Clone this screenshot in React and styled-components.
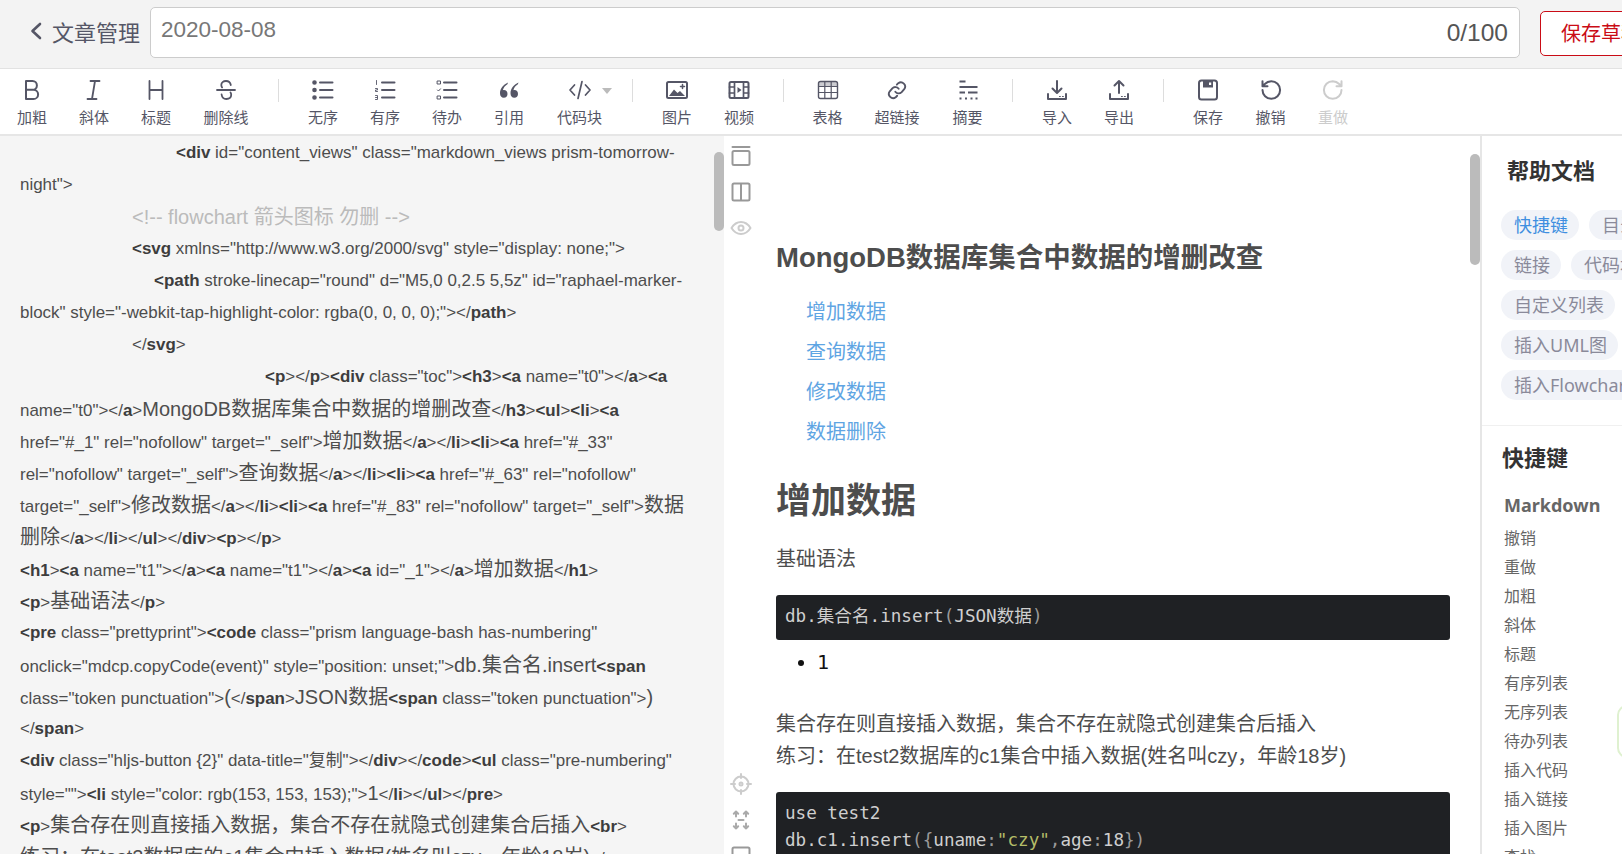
import React from "react";
import styled, { createGlobalStyle } from "styled-components";

const Global = createGlobalStyle`
  html, body { margin: 0; padding: 0; background: #fff; overflow: hidden; }
  * { box-sizing: border-box; }
`;

const sans = `"Liberation Sans", "Noto Sans CJK SC", sans-serif`;
const mono = `"DejaVu Sans Mono", "Noto Sans CJK SC", monospace`;

const Page = styled.div`
  width: 1622px; height: 854px; overflow: hidden; position: relative;
  font-family: ${sans}; background: #fff;
`;
const TopBar = styled.header`
  height: 69px; background: #f3f3f3; border-bottom: 1px solid #e2e2e2;
  display: flex; padding-left: 29px; overflow: hidden;
`;
const Back = styled.div`
  width: 121px; flex: none; display: flex; align-items: center; gap: 9px; height: 61px;
  color: #555666; font-size: 22px; white-space: nowrap;
  svg { flex: none; }
`;
const TitleBox = styled.div`
  width: 1370px; height: 51px; margin-top: 7px; flex: none; background: #fff;
  border: 1px solid #ccc; border-radius: 5px; display: flex; justify-content: space-between;
  padding: 0 11px 0 10px;
`;
const TitleText = styled.span`
  font-size: 22.5px; color: #777; line-height: 44px;
`;
const Counter = styled.span`
  font-size: 24.5px; color: #555; line-height: 50px;
`;
const DraftButton = styled.button`
  flex: none; margin: 11px 0 0 20px; width: 122px; height: 45px; background: #fff;
  border: 1px solid #ca0c16; border-radius: 5px; color: #ca0c16; font: 20px ${sans};
  padding: 0 0 3px 20px; text-align: left; white-space: nowrap;
`;
const Toolbar = styled.nav`
  height: 67px; background: #fff; border-bottom: 2px solid #e6e6e6;
  display: flex; padding: 9px 0 0 1px; color: #555666;
`;
const Tool = styled.div`
  width: ${p => p.$w || 62}px; flex: none; position: relative; display: flex; flex-direction: column; align-items: center;
  color: ${p => (p.$off ? "#cccccc" : "#555666")};
`;
const ToolIcon = styled.svg`
  width: 24px; height: 24px; flex: none; fill: none; stroke: currentColor; stroke-width: 2;
  stroke-linecap: round; stroke-linejoin: round;
`;
const ToolLabel = styled.span`
  font-size: 15px; line-height: 20px; margin-top: 6px; white-space: nowrap;
`;
const Caret = styled.i`
  position: absolute; left: 62px; top: 10px; width: 0; height: 0;
  border-left: 5px solid transparent; border-right: 5px solid transparent; border-top: 6px solid #bbb;
`;
const Divider = styled.span`
  flex: none; width: 1px; height: 23px; margin: 0 13px; background: #ddd; transform: translateY(1px);
`;
const Workspace = styled.main`
  display: flex; height: 718px; overflow: hidden;
`;
const SourcePane = styled.section`
  width: 724px; flex: none; background: #f5f5f5; position: relative; overflow: hidden;
  padding: 1px 0 0 20px; color: #4d4d4d;
`;
const Line = styled.div`
  height: 32px; line-height: 32px; white-space: nowrap; padding-left: ${p => p.$indent || 0}px;
  font-size: 17px; color: ${p => (p.$comment ? "#bbbbbb" : "#4d4d4d")};
`;
const Attr = styled.span`
  font-size: 16.95px;
`;
const Bold = styled.b`
  font-size: 16.95px; font-weight: 700; color: #3d3d3d;
`;
const Big = styled.span`
  font-size: 20px;
`;
const CommentText = styled.span`
  font-size: 20px;
`;
const Thumb = styled.div`
  position: absolute; left: ${p => p.$left}px; top: ${p => p.$top}px; width: 10px; height: ${p => p.$h}px;
  background: #bbb; border-radius: 5px;
`;
const Rail = styled.aside`
  width: 52px; flex: none; display: flex; flex-direction: column; justify-content: space-between;
  padding: 9px 0 0 6px; margin-bottom: -13px; background: #fff;
`;
const RailGroup = styled.div`
  display: flex; flex-direction: column; gap: 14px;
`;
const RailIcon = styled.svg`
  display: block; width: 22px; height: 22px; fill: none; stroke: ${p => p.$c || "#999"}; stroke-width: 2;
  stroke-linecap: round; stroke-linejoin: round;
`;
const Preview = styled.article`
  width: 704px; flex: none; position: relative; overflow: hidden; padding: 102px 30px 0 0; color: #4d4d4d;
`;
const H2 = styled.h2`
  margin: 0 0 14px; font-size: 27.5px; line-height: 40px; font-weight: 700; color: #4d4d4d; white-space: nowrap;
`;
const TocLink = styled.a`
  display: block; margin-left: 30px; font-size: 20px; line-height: 40px; color: #5fa5e3; height: 40px;
`;
const H1 = styled.h1`
  margin: 24px 0 17px; font-size: 35px; line-height: 50px; font-weight: 700; color: #4d4d4d;
`;
const Para = styled.p`
  margin: ${p => p.$mt || 0}px 0 0; font-size: 20px; line-height: 32px; color: #4d4d4d; white-space: nowrap;
`;
const CodeBlock = styled.pre`
  margin: 20px 0 0; background: #1f2124; border-radius: 3px; padding: 8px 9px 10px; color: #cfcfcf;
  font-family: ${mono}; font-size: 17.6px; line-height: 27px; white-space: pre; overflow: hidden;
`;
const Punct = styled.span`
  color: #999;
`;
const Str = styled.span`
  color: #b5bd68;
`;
const NumList = styled.ul`
  margin: 6px 0 0; padding: 0 0 0 41px; font-family: ${mono}; font-size: 20px; line-height: 32px; color: #111;
`;
const Help = styled.aside`
  flex: 1; min-width: 0; border-left: 2px solid #e6e6e6; overflow: hidden; padding-top: 18px;
`;
const HelpHead = styled.div`
  padding: 0 0 0 ${p => p.$pad}px; font-size: 22px; line-height: 30px; font-weight: 700; color: #333;
  font-family: "Noto Sans CJK SC", sans-serif; white-space: nowrap;
`;
const Chips = styled.div`
  display: flex; flex-direction: column; gap: 10px; margin: 26px 0 25px; padding-left: 19px;
`;
const ChipRow = styled.div`
  display: flex; gap: 10px;
`;
const Chip = styled.span`
  flex: none; height: 30px; border-radius: 15px; background: #f1f3f8; padding: 0 11px 0 13px;
  font: 18px/30px "Noto Sans", "Noto Sans CJK SC", sans-serif; white-space: nowrap;
  color: ${p => (p.$active ? "#3f8fe0" : "#8a8a9a")};
`;
const Rule = styled.div`
  height: 1px; background: #f0f0f0; margin-bottom: 15px;
`;
const KeyTitle = styled.div`
  margin: 21px 0 5px 22px; font: 700 18px/26px "Noto Sans", "Noto Sans CJK SC", sans-serif; color: #666;
`;
const KeyItem = styled.div`
  margin-left: 22px; font: 16px/29px "Noto Sans CJK SC", sans-serif; color: #666; white-space: nowrap;
`;
const FloatTab = styled.div`
  position: absolute; left: 1617px; top: 705px; width: 24px; height: 53px; background: #fff;
  border: 2px solid #dff1d0; border-radius: 10px;
`;

const I = ({ children }) => <ToolIcon viewBox="0 0 24 24">{children}</ToolIcon>;

const quoteMark = "M11 4.500C6 6.800 3 10.800 3 15.200c0 2.800 1.500 4.600 3.800 4.600s3.700-1.700 3.700-3.900-1.500-3.800-3.500-3.800c-.4 0-.8 0-1.100.2.500-2.500 2.200-4.600 4.500-6z";

const icons = {
  bold: <I><path d="M6 3h6.500a4.400 4.400 0 0 1 0 8.800H6zM6 11.800h7.500a4.600 4.600 0 0 1 0 9.200H6z" /></I>,
  italic: <I><path d="M8.500 3h9M13 3 10 21M5.500 21h9" strokeWidth="1.8" /></I>,
  heading: <I><path d="M5.500 3v18M18.500 3v18M5.500 12h13" strokeWidth="1.8" /></I>,
  strike: <I><path d="M3 12h18M16.800 7C16.300 4.200 14.500 3 12 3 9.200 3 7.300 4.700 7.300 7c0 .9.3 1.700.8 2.400M7.600 16.500C8 19.500 9.800 21 12.300 21c3 0 4.900-1.800 4.900-4.200 0-.9-.2-1.700-.7-2.400" strokeWidth="1.8" /></I>,
  ul: <I><path d="M9 4.500h12.500M9 12h12.500M9 19.500h12.500" /><circle cx="3.500" cy="4.500" r="1.300" fill="currentColor" /><circle cx="3.500" cy="12" r="1.300" fill="currentColor" /><circle cx="3.500" cy="19.500" r="1.300" fill="currentColor" /></I>,
  ol: <I><path d="M9 4.500h12.500M9 12h12.500M9 19.500h12.500" /><path d="M3.500 2.500v4M2.500 10.500h2v1.500h-2v1.500h2M2.500 17.500h2v4h-2M2.500 19.500h2" strokeWidth="0.9" /></I>,
  todo: <I><path d="M9 4.500h12.500M9 12h12.500M9 19.500h12.500" /><path d="M2.500 3h3v3h-3zM2.500 12l1 1 2-2.200M2.500 18h3v3h-3z" strokeWidth="1" /></I>,
  quote: <I><path d={quoteMark} fill="currentColor" stroke="none" /><path d={quoteMark} transform="translate(10.500 0)" fill="currentColor" stroke="none" /></I>,
  code: <I><path d="M6.500 7 2 12l4.500 5M17.500 7 22 12l-4.500 5M14 3.500 10 20.500" strokeWidth="1.7" /></I>,
  image: <I><rect x="2" y="4" width="20" height="16" rx="1.500" /><path d="M4 18l5-6.500 3.500 3.500 2.500-2 5 5z" fill="currentColor" stroke="none" /><path d="M17.500 6.500v4M15.500 8.500h4" strokeWidth="1.5" /></I>,
  video: <I><rect x="2.500" y="4" width="19" height="16" rx="1.500" /><path d="M7.500 4v16M16.500 4v16M2.500 9h5M2.500 15h5M16.500 9h5M16.500 15h5" strokeWidth="1.7" /><path d="M10.500 9l4 3-4 3z" fill="currentColor" stroke="none" /></I>,
  table: <I><rect x="2.500" y="3.500" width="19" height="17" rx="2" strokeWidth="1.4" /><path d="M2.500 8.500h19M2.500 14.500h19M8.800 4v16M15.200 4v16" strokeWidth="1.2" /><path d="M3 4h18v4H3z" fill="currentColor" stroke="none" opacity=".3" /></I>,
  link: <I><g transform="translate(1.800 1.800) scale(.85)"><path d="M10 14a5 5 0 0 0 7.500.5l3-3.500a5 5 0 0 0-7-7l-1.700 1.700M14 10.500a5 5 0 0 0-7.500-.500l-3 3.500a5 5 0 0 0 7 7l1.700-1.700" strokeWidth="2.200" /></g></I>,
  summary: <I><path d="M3.500 3.500h6M3.500 9h18M3.500 14.500h5.500M12 14.500h9.500M3.500 20.500h2M9 20.500h2M14.500 20.500h2M19.500 20.500h2" strokeWidth="2.200" strokeLinecap="butt" /></I>,
  importIcon: <I><path d="M12 3v11.500M7.500 10.500l4.500 4.500 4.500-4.500" /><path d="M3 16v5h18v-5" /><path d="M14.500 18.500h.8M17.500 18.500h.8" strokeWidth="1.200" /></I>,
  exportIcon: <I><path d="M12 15V3.500M7.500 7.500 12 3l4.500 4.500" /><path d="M3 16v5h18v-5" /><path d="M14.500 18.500h.8M17.500 18.500h.8" strokeWidth="1.200" /></I>,
  save: <I><rect x="3" y="2.500" width="18" height="19" rx="2.500" /><path d="M7 3h10v6.500H7z" fill="currentColor" stroke="none" /><path d="M13 4.500h2.200v2.500H13z" fill="#fff" stroke="none" /></I>,
  undo: <I><path d="M3.500 12a8.800 8.800 0 1 0 8.800-8.800A9.500 9.500 0 0 0 5.800 6L3.500 8.200M3.500 3.200v5h5" /></I>,
  redo: <I><path d="M20.500 12a8.800 8.800 0 1 1-8.800-8.800A9.500 9.500 0 0 1 18.200 6l2.300 2.200M20.500 3.200v5h-5" /></I>,
};

const toolbar = [
  { i: "bold", l: "加粗" }, { i: "italic", l: "斜体" }, { i: "heading", l: "标题" }, { i: "strike", l: "删除线", w: 78 }, { d: 1 },
  { i: "ul", l: "无序" }, { i: "ol", l: "有序" }, { i: "todo", l: "待办" }, { i: "quote", l: "引用" }, { i: "code", l: "代码块", w: 79, caret: 1 }, { d: 1 },
  { i: "image", l: "图片" }, { i: "video", l: "视频" }, { d: 1 },
  { i: "table", l: "表格", w: 61 }, { i: "link", l: "超链接", w: 78 }, { i: "summary", l: "摘要", w: 63 }, { d: 1 },
  { i: "importIcon", l: "导入" }, { i: "exportIcon", l: "导出" }, { d: 1 },
  { i: "save", l: "保存" }, { i: "undo", l: "撤销", w: 63 }, { i: "redo", l: "重做", off: 1 },
];

const source = [
  [156, '*<div* id="content_views" class="markdown_views prism-tomorrow-'],
  [0, 'night">'],
  [112, '<!-- flowchart 箭头图标 勿删 -->', true],
  [112, '*<svg* xmlns="http://www.w3.org/2000/svg" style="display: none;">'],
  [134, '*<path* stroke-linecap="round" d="M5,0 0,2.5 5,5z" id="raphael-marker-'],
  [0, 'block" style="-webkit-tap-highlight-color: rgba(0, 0, 0, 0);"></*path*>'],
  [112, '</*svg*>'],
  [245, '*<p*></*p*>*<div* class="toc">*<h3*>*<a* name="t0"></*a*>*<a*'],
  [0, 'name="t0"></*a*>~MongoDB数据库集合中数据的增删改查~</*h3*>*<ul*>*<li*>*<a*'],
  [0, 'href="#_1" rel="nofollow" target="_self">~增加数据~</*a*></*li*>*<li*>*<a* href="#_33"'],
  [0, 'rel="nofollow" target="_self">~查询数据~</*a*></*li*>*<li*>*<a* href="#_63" rel="nofollow"'],
  [0, 'target="_self">~修改数据~</*a*></*li*>*<li*>*<a* href="#_83" rel="nofollow" target="_self">~数据~'],
  [0, '~删除~</*a*></*li*></*ul*></*div*>*<p*></*p*>'],
  [0, '*<h1*>*<a* name="t1"></*a*>*<a* name="t1"></*a*>*<a* id="_1"></*a*>~增加数据~</*h1*>'],
  [0, '*<p*>~基础语法~</*p*>'],
  [0, '*<pre* class="prettyprint">*<code* class="prism language-bash has-numbering"'],
  [0, 'onclick="mdcp.copyCode(event)" style="position: unset;">~db.集合名.insert~*<span*'],
  [0, 'class="token punctuation">~(~</*span*>~JSON数据~*<span* class="token punctuation">~)~'],
  [0, '</*span*>'],
  [0, '*<div* class="hljs-button {2}" data-title="复制"></*div*></*code*>*<ul* class="pre-numbering"'],
  [0, 'style="">*<li* style="color: rgb(153, 153, 153);">~1~</*li*></*ul*></*pre*>'],
  [0, '*<p*>~集合存在则直接插入数据，集合不存在就隐式创建集合后插入~*<br*>'],
  [0, '~练习：在test2数据库的c1集合中插入数据(姓名叫czy，年龄18岁)~</*p*>'],
];

const renderSource = (text) =>
  text.split(/(\*[^*]+\*|~[^~]+~)/).filter(Boolean).map((part, k) => {
    if (part[0] === "*") return <Bold key={k}>{part.slice(1, -1)}</Bold>;
    if (part[0] === "~") return <Big key={k}>{part.slice(1, -1)}</Big>;
    return <Attr key={k}>{part}</Attr>;
  });

const chipRows = [
  [["快捷键", true], ["目录"]],
  [["链接"], ["代码块"]],
  [["自定义列表"]],
  [["插入UML图"]],
  [["插入Flowchart流程图"]],
];
const keys = ["撤销", "重做", "加粗", "斜体", "标题", "有序列表", "无序列表", "待办列表", "插入代码", "插入链接", "插入图片", "查找"];

export default function App() {
  return (
    <Page>
      <Global />
      <TopBar>
        <Back>
          <svg width="14" height="18" viewBox="0 0 14 18" fill="none" stroke="#555666" strokeWidth="2.6" strokeLinecap="round" strokeLinejoin="round"><path d="M11 2 3.500 9 11 16" /></svg>
          <span>文章管理</span>
        </Back>
        <TitleBox>
          <TitleText>2020-08-08</TitleText>
          <Counter>0/100</Counter>
        </TitleBox>
        <DraftButton>保存草稿</DraftButton>
      </TopBar>
      <Toolbar>
        {toolbar.map((t, k) =>
          t.d ? (
            <Divider key={k} />
          ) : (
            <Tool key={k} $w={t.w} $off={t.off}>
              {icons[t.i]}
              <ToolLabel>{t.l}</ToolLabel>
              {t.caret && <Caret />}
            </Tool>
          )
        )}
      </Toolbar>
      <Workspace>
        <SourcePane>
          {source.map(([indent, text, comment], k) => (
            <Line key={k} $indent={indent} $comment={comment}>
              {comment ? <CommentText>{text}</CommentText> : renderSource(text)}
            </Line>
          ))}
          <Thumb $left={714} $top={16} $h={79} />
        </SourcePane>
        <Rail>
          <RailGroup>
            <RailIcon viewBox="0 0 22 22"><path d="M2.500 2h17" /><rect x="2.500" y="6" width="17" height="14" rx="1.500" /></RailIcon>
            <RailIcon viewBox="0 0 22 22"><rect x="2.500" y="2.500" width="17" height="17" rx="1.500" /><path d="M11 3v16" /></RailIcon>
            <RailIcon viewBox="0 0 22 22" $c="#cccccc"><path d="M1.500 11C4 7 7.200 5 11 5s7 2 9.500 6c-2.500 4-5.700 6-9.500 6s-7-2-9.500-6z" /><circle cx="11" cy="11" r="2.500" /></RailIcon>
          </RailGroup>
          <RailGroup>
            <RailIcon viewBox="0 0 22 22" $c="#cccccc"><circle cx="11" cy="11" r="7.500" /><circle cx="11" cy="11" r="1.500" /><path d="M11 1v4M11 17v4M1 11h4M17 11h4" /></RailIcon>
            <RailIcon viewBox="0 0 22 22" $c="#aaaaaa"><path d="M6 7.500V2.500M3.800 4.700 6 2.500l2.200 2.200M16 7.500V2.500M13.800 4.700 16 2.500l2.200 2.200M6 14.500v5M3.800 17.300 6 19.500l2.200-2.200M16 14.500v5M13.800 17.300 16 19.500l2.200-2.200M8.500 11h5" /></RailIcon>
            <RailIcon viewBox="0 0 22 22"><rect x="2.500" y="2.500" width="17" height="17" rx="1.500" /></RailIcon>
          </RailGroup>
        </Rail>
        <Preview>
          <H2>MongoDB数据库集合中数据的增删改查</H2>
          <TocLink>增加数据</TocLink>
          <TocLink>查询数据</TocLink>
          <TocLink>修改数据</TocLink>
          <TocLink>数据删除</TocLink>
          <H1>增加数据</H1>
          <Para>基础语法</Para>
          <CodeBlock>db.集合名.insert<Punct>(</Punct>JSON数据<Punct>)</Punct></CodeBlock>
          <NumList><li>1</li></NumList>
          <Para $mt={30}>集合存在则直接插入数据，集合不存在就隐式创建集合后插入</Para>
          <Para>练习：在test2数据库的c1集合中插入数据(姓名叫czy，年龄18岁)</Para>
          <CodeBlock>
            {"use test2\ndb.c1.insert"}<Punct>(</Punct><Punct>{"{"}</Punct>uname<Punct>:</Punct><Str>"czy"</Str><Punct>,</Punct>age<Punct>:</Punct>18<Punct>{"}"}</Punct><Punct>)</Punct>
          </CodeBlock>
          <Thumb $left={694} $top={18} $h={111} />
        </Preview>
        <Help>
          <HelpHead $pad={25}>帮助文档</HelpHead>
          <Chips>
            {chipRows.map((row, r) => (
              <ChipRow key={r}>
                {row.map(([label, active]) => <Chip key={label} $active={active}>{label}</Chip>)}
              </ChipRow>
            ))}
          </Chips>
          <Rule />
          <HelpHead $pad={20}>快捷键</HelpHead>
          <KeyTitle>Markdown</KeyTitle>
          {keys.map((k) => <KeyItem key={k}>{k}</KeyItem>)}
        </Help>
      </Workspace>
      <FloatTab />
    </Page>
  );
}
